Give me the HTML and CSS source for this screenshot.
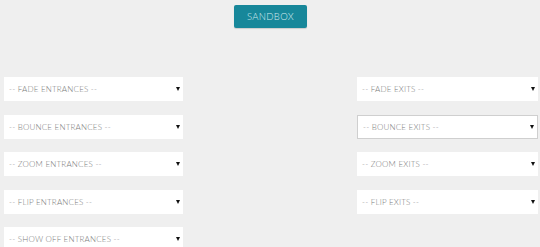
FILE: index.html
```html
<!DOCTYPE html>
<html>
<head>
<meta charset="utf-8">
<link rel="stylesheet" href="styles.css">
</head>
<body>
<div class="top"><button class="sandbox">SANDBOX</button></div>
<div class="grid">
  <div class="sel"><span>-- FADE ENTRANCES --</span><i class="arrow"></i></div>
  <div></div>
  <div class="sel"><span>-- FADE EXITS --</span><i class="arrow"></i></div>
  <div class="sel"><span>-- BOUNCE ENTRANCES --</span><i class="arrow"></i></div>
  <div></div>
  <div class="sel bordered"><span>-- BOUNCE EXITS --</span><i class="arrow"></i></div>
  <div class="sel"><span>-- ZOOM ENTRANCES --</span><i class="arrow"></i></div>
  <div></div>
  <div class="sel"><span>-- ZOOM EXITS --</span><i class="arrow"></i></div>
  <div class="sel"><span>-- FLIP ENTRANCES --</span><i class="arrow"></i></div>
  <div></div>
  <div class="sel"><span>-- FLIP EXITS --</span><i class="arrow"></i></div>
  <div class="sel"><span>-- SHOW OFF ENTRANCES --</span><i class="arrow"></i></div>
</div>
</body>
</html>
```
FILE: styles.css
```css
html, body { margin: 0; padding: 0; }
body {
  background: #efefef;
  font-family: Lato, "Open Sans", sans-serif;
  width: 540px;
  height: 247px;
  overflow: hidden;
}
.top {
  display: flex;
  justify-content: center;
  padding-top: 5px;
  padding-left: 1px;
}
.sandbox {
  width: 73px;
  height: 23px;
  background: #17879a;
  border: none;
  border-radius: 2px;
  color: #d2eaee;
  font-family: Lato, sans-serif;
  font-weight: 300;
  font-size: 9.5px;
  letter-spacing: 0.3px;
  padding: 0;
  box-shadow: 0 1px 1px rgba(0,0,0,0.15);
}
.grid {
  display: grid;
  grid-template-columns: 179px 1fr 181px;
  row-gap: 13.5px;
  padding: 0 2px 0 4px;
  margin-top: 49px;
}
.sel {
  height: 24px;
  background: #fff;
  display: flex;
  align-items: center;
  justify-content: space-between;
  padding: 0 3px 0 5px;
  box-sizing: border-box;
  color: #7a7a7a;
  font-weight: 300;
  font-size: 8px;
  letter-spacing: 0.2px;
}
.bordered { border: 1px solid #cfcfcf; }
.arrow {
  width: 0;
  height: 0;
  border-left: 2.5px solid transparent;
  border-right: 2.5px solid transparent;
  border-top: 4px solid #111;
}
```
